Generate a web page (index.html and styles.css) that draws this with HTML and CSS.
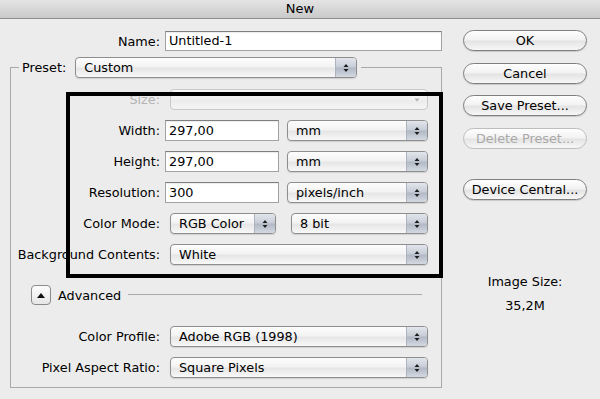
FILE: index.html
```html
<!DOCTYPE html>
<html lang="en">
<head>
    <meta charset="UTF-8">
    <meta name="viewport" content="width=device-width, initial-scale=1.0">
    <title>New</title>
    <link rel="stylesheet" href="styles.css">
</head>
<body>

    <div class="titlebar">New</div>

    <div class="dialog">
        <div class="main">
            <div class="name-row">
                <span class="lbl">Name:</span>
                <div class="field name-field">Untitled-1</div>
            </div>

            <fieldset class="preset">
                <legend>
                    <span class="lbl">Preset:</span>
                    <div class="select preset-select">
                        <span class="val">Custom</span>
                        <span class="arrows"><svg width="6" height="10" viewBox="0 0 6 10"><path d="M3 1L5.5 4H0.5Z M0.5 6H5.5L3 9Z"/></svg></span>
                    </div>
                </legend>

                <div class="rows doc-rows">
                    <span class="lbl disabled">Size:</span>
                    <div class="select wide off">
                        <span class="val"></span>
                        <span class="caret"><svg width="6" height="4" viewBox="0 0 6 4"><path d="M0.5 0.5H5.5L3 3.5Z"/></svg></span>
                    </div>

                    <span class="lbl">Width:</span>
                    <div class="pair">
                        <div class="field num">297,00</div>
                        <div class="select unit">
                            <span class="val">mm</span>
                            <span class="arrows"><svg width="6" height="10" viewBox="0 0 6 10"><path d="M3 1L5.5 4H0.5Z M0.5 6H5.5L3 9Z"/></svg></span>
                        </div>
                    </div>

                    <span class="lbl">Height:</span>
                    <div class="pair">
                        <div class="field num">297,00</div>
                        <div class="select unit">
                            <span class="val">mm</span>
                            <span class="arrows"><svg width="6" height="10" viewBox="0 0 6 10"><path d="M3 1L5.5 4H0.5Z M0.5 6H5.5L3 9Z"/></svg></span>
                        </div>
                    </div>

                    <span class="lbl">Resolution:</span>
                    <div class="pair">
                        <div class="field num">300</div>
                        <div class="select unit">
                            <span class="val">pixels/inch</span>
                            <span class="arrows"><svg width="6" height="10" viewBox="0 0 6 10"><path d="M3 1L5.5 4H0.5Z M0.5 6H5.5L3 9Z"/></svg></span>
                        </div>
                    </div>

                    <span class="lbl">Color Mode:</span>
                    <div class="pair mode">
                        <div class="select mode-select">
                            <span class="val">RGB Color</span>
                            <span class="arrows"><svg width="6" height="10" viewBox="0 0 6 10"><path d="M3 1L5.5 4H0.5Z M0.5 6H5.5L3 9Z"/></svg></span>
                        </div>
                        <div class="select bits">
                            <span class="val">8 bit</span>
                            <span class="arrows"><svg width="6" height="10" viewBox="0 0 6 10"><path d="M3 1L5.5 4H0.5Z M0.5 6H5.5L3 9Z"/></svg></span>
                        </div>
                    </div>

                    <span class="lbl">Background Contents:</span>
                    <div class="select wide">
                        <span class="val">White</span>
                        <span class="arrows"><svg width="6" height="10" viewBox="0 0 6 10"><path d="M3 1L5.5 4H0.5Z M0.5 6H5.5L3 9Z"/></svg></span>
                    </div>

                    <!-- annotation frame drawn over the rows -->
                    <div class="highlight"></div>
                </div>

                <div class="advanced">
                    <span class="disclosure"><svg width="8" height="5" viewBox="0 0 8 5"><path d="M4 0L8 5H0Z"/></svg></span>
                    <span class="adv-text">Advanced</span>
                    <span class="rule"></span>
                </div>

                <div class="rows adv-rows">
                    <span class="lbl">Color Profile:</span>
                    <div class="select wide">
                        <span class="val">Adobe RGB (1998)</span>
                        <span class="arrows"><svg width="6" height="10" viewBox="0 0 6 10"><path d="M3 1L5.5 4H0.5Z M0.5 6H5.5L3 9Z"/></svg></span>
                    </div>

                    <span class="lbl">Pixel Aspect Ratio:</span>
                    <div class="select wide">
                        <span class="val">Square Pixels</span>
                        <span class="arrows"><svg width="6" height="10" viewBox="0 0 6 10"><path d="M3 1L5.5 4H0.5Z M0.5 6H5.5L3 9Z"/></svg></span>
                    </div>
                </div>
            </fieldset>
        </div>

        <div class="side">
            <div class="btn">OK</div>
            <div class="btn">Cancel</div>
            <div class="btn">Save Preset...</div>
            <div class="btn disabled">Delete Preset...</div>
            <div class="btn device">Device Central...</div>

            <div class="image-size">Image Size:</div>
            <div class="image-value">35,2M</div>
        </div>
    </div>

</body>
</html>
```

FILE: styles.css
```css
body {
    font-family: "DejaVu Sans", sans-serif;
    font-size: 12.8px;
    color: #000;
    margin: 0;
    padding: 0;
    background: #ececec;
}

.titlebar {
    height: 18px;
    line-height: 18px;
    text-align: center;
    font-size: 13px;
    background: linear-gradient(#e4e4e4, #c9c9c9);
    border-bottom: 1px solid #8f8f8f;
}

.dialog {
    display: flex;
}

.main {
    width: 442px;
}

.lbl {
    text-align: right;
    white-space: nowrap;
    align-self: center;
}

.lbl.disabled {
    color: #b3b3b3;
}

/* name */

.name-row {
    display: grid;
    grid-template-columns: 160px 277px;
    column-gap: 5px;
    margin-top: 12px;
    align-items: center;
}

.field {
    box-sizing: border-box;
    height: 21px;
    line-height: 19px;
    padding-left: 3px;
    background: #fff;
    border: 1px solid #a2a2a2;
    border-top-color: #7f7f7f;
    box-shadow: inset 0 1px 1px rgba(0, 0, 0, 0.08);
}

.name-field {
    height: 20px;
    line-height: 18px;
}

/* preset group */

.preset {
    margin: 6px 0 0 10px;
    padding: 0 0 9px 0;
    width: 432px;
    box-sizing: border-box;
    min-width: 0;
    border: 1px solid #a9a9a9;
}

.preset legend {
    display: flex;
    align-items: center;
    gap: 9px;
    margin-left: 8px;
    padding: 0 4px 0 3px;
}

.preset-select {
    width: 282px;
}

.rows {
    display: grid;
    grid-template-columns: 149px 263px;
    grid-auto-rows: 21px;
    column-gap: 5px;
    row-gap: 10px;
}

.doc-rows {
    position: relative;
    margin-top: 11px;
}

.adv-rows {
    margin-top: 21px;
}

.pair {
    display: flex;
    gap: 8px;
}

.pair.mode {
    gap: 15px;
    margin-left: 5px;
}

.num {
    width: 114px;
}

.unit {
    width: 141px;
}

.mode-select {
    width: 106px;
}

.bits {
    width: 137px;
}

.wide {
    margin-left: 5px;
}

/* popup buttons */

.select {
    display: flex;
    align-items: center;
    box-sizing: border-box;
    height: 21px;
    padding-left: 8px;
    border: 1px solid #8e8e8e;
    border-radius: 4px;
    background: linear-gradient(#fdfdfd, #f3f3f3 45%, #e6e6e6 55%, #f8f8f8);
    box-shadow: 0 1px 1px rgba(0, 0, 0, 0.12);
    overflow: hidden;
    white-space: nowrap;
}

.select .val {
    flex: 1;
}

.select .arrows {
    display: flex;
    align-items: center;
    justify-content: center;
    width: 20px;
    height: 100%;
    border-left: 1px solid #aeb4be;
    background: linear-gradient(#e2e6ec, #c6ccd6 48%, #b0b8c5 52%, #d4d9e1);
}

.select .arrows svg {
    fill: #1e1e1e;
}

.select.off {
    border-color: #c9c9c9;
    box-shadow: none;
    background: linear-gradient(#fafafa, #f0f0f0 50%, #ebebeb 52%, #f5f5f5);
}

.select .caret {
    width: 20px;
    display: flex;
    justify-content: center;
}

.select .caret svg {
    fill: #b0b0b0;
}

/* annotation */

.highlight {
    position: absolute;
    left: 55px;
    top: 3px;
    width: 377px;
    height: 186px;
    box-sizing: border-box;
    border: 4px solid #000;
    pointer-events: none;
}

/* advanced */

.advanced {
    display: flex;
    align-items: center;
    height: 20px;
    margin: 20px 19px 0 20px;
}

.disclosure {
    display: flex;
    align-items: center;
    justify-content: center;
    width: 20px;
    height: 20px;
    box-sizing: border-box;
    border: 1px solid #8a8a8a;
    border-radius: 4px;
    background: linear-gradient(#fdfdfd, #e6e6e6);
}

.disclosure svg {
    fill: #111;
}

.adv-text {
    margin-left: 7px;
}

.rule {
    flex: 1;
    height: 1px;
    margin-left: 7px;
    margin-top: -2px;
    background: #a9a9a9;
}

/* right column */

.side {
    width: 124px;
    margin-left: 21px;
    padding-top: 11px;
    display: flex;
    flex-direction: column;
}

.btn {
    display: flex;
    align-items: center;
    justify-content: center;
    box-sizing: border-box;
    height: 21px;
    margin-bottom: 11px;
    border: 1px solid #7f7f7f;
    border-radius: 11px;
    background: linear-gradient(#fefefe, #f2f2f2 48%, #e3e3e3 52%, #f7f7f7);
    box-shadow: 0 1px 1px rgba(0, 0, 0, 0.15);
    white-space: nowrap;
}

.btn:nth-child(1) { margin-bottom: 12px; }
.btn:nth-child(3) { margin-bottom: 12px; }

.btn.disabled {
    color: #a9a9a9;
    border-color: #bdbdbd;
    box-shadow: none;
    margin-bottom: 30px;
}

.image-size,
.image-value {
    text-align: center;
    line-height: 16px;
}

.image-size {
    margin-top: 63px;
}

.image-value {
    margin-top: 8px;
}
```
